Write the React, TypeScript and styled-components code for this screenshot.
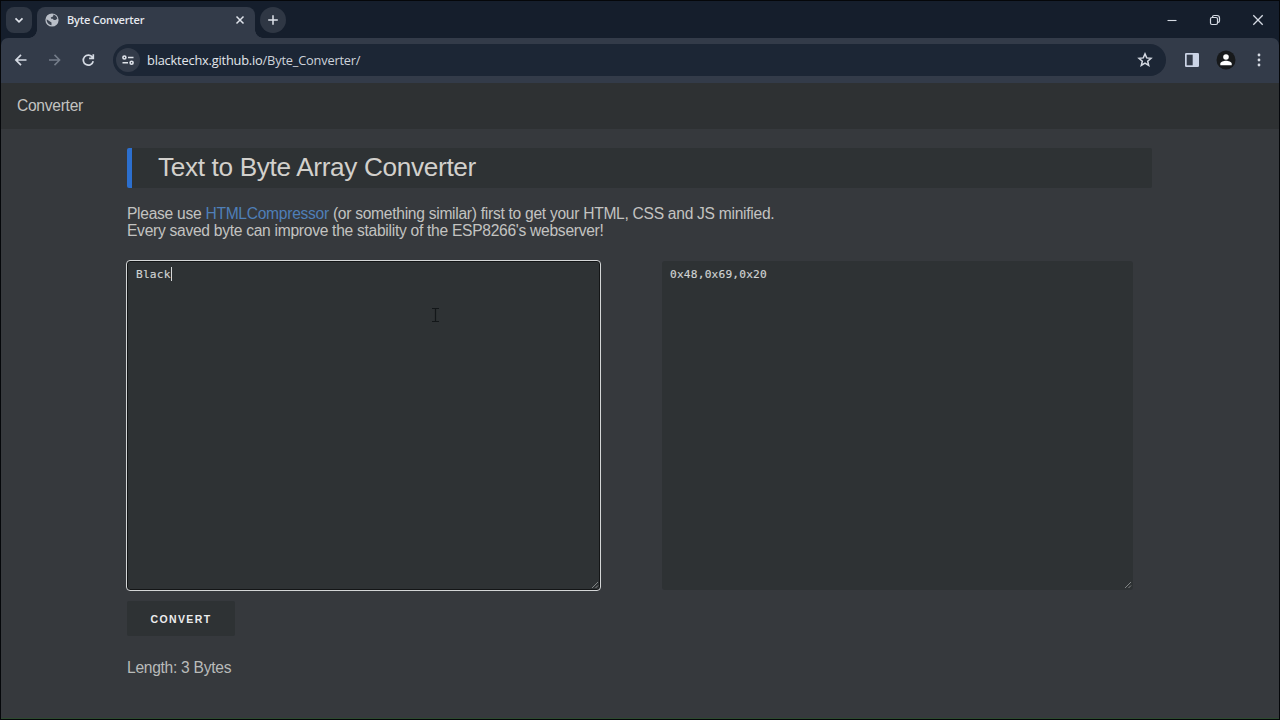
import React from "react";
import styled, { createGlobalStyle } from "styled-components";

const GlobalStyle = createGlobalStyle`
  * { box-sizing: border-box; }
  html, body { margin: 0; padding: 0; background: #000; overflow: hidden; }
`;

const ui = `"Open Sans", "Noto Sans", sans-serif`;
const sans = `"Liberation Sans", Arial, sans-serif`;
const mono = `"DejaVu Sans Mono", "Liberation Mono", monospace`;

const Window = styled.div`
  width: 1280px;
  height: 720px;
  display: flex;
  flex-direction: column;
  background: #151e2c;
  border: 1px solid #05070a;
`;

const TabStrip = styled.header`
  height: 37px;
  flex: none;
  display: flex;
  align-items: flex-start;
  padding: 6px 0 0 5px;
  background: #151e2c;
`;

const StripButton = styled.button<{ $round?: boolean }>`
  width: 26px;
  height: 26px;
  padding: 0;
  border: 0;
  flex: none;
  display: grid;
  place-items: center;
  border-radius: ${(p) => (p.$round ? "50%" : "8px")};
  background: #2f3744;
  color: #dfe3ea;
`;

const Tab = styled.div`
  position: relative;
  width: 218px;
  height: 31px;
  margin: 0 5px;
  padding: 0 8px 5px 8px;
  display: flex;
  align-items: center;
  border-radius: 8px 8px 0 0;
  background: #333b49;
  &::before,
  &::after {
    content: "";
    position: absolute;
    bottom: 0;
    width: 8px;
    height: 8px;
  }
  &::before {
    left: -8px;
    background: radial-gradient(circle at 0 0, transparent 7.5px, #333b49 8px);
  }
  &::after {
    right: -8px;
    background: radial-gradient(circle at 100% 0, transparent 7.5px, #333b49 8px);
  }
`;

const TabTitle = styled.span`
  flex: 1;
  margin-left: 8px;
  font: 600 11px/16px ${ui};
  letter-spacing: -0.18px;
  color: #e6e9ef;
  white-space: nowrap;
`;

const IconButton = styled.button<{ $w?: number; $dim?: boolean }>`
  width: ${(p) => p.$w ?? 34}px;
  height: 30px;
  flex: none;
  padding: 0;
  border: 0;
  display: grid;
  place-items: center;
  background: none;
  color: ${(p) => (p.$dim ? "#757d8a" : "#d5dae3")};
`;

const WindowControls = styled.div`
  margin: -2px 0 0 auto;
  display: flex;
`;

const Toolbar = styled.nav`
  height: 45px;
  flex: none;
  display: flex;
  align-items: center;
  padding: 0 3px 2px 3px;
  background: #333b49;
  border-radius: 7px 7px 0 0;
`;

const AddressBar = styled.div`
  width: 1055px;
  height: 32px;
  margin-left: 7px;
  padding: 0 4px 0 3px;
  display: flex;
  align-items: center;
  border-radius: 16px;
  background: #1c2635;
`;

const SiteInfo = styled.span`
  width: 24px;
  height: 24px;
  display: grid;
  place-items: center;
  border-radius: 50%;
  background: #333b49;
  color: #dfe3ea;
`;

const Url = styled.span`
  flex: 1;
  margin-left: 7px;
  font: 400 12.8px/20px ${ui};
  letter-spacing: -0.19px;
  color: #e3e6ec;
`;

const UrlPath = styled.span`
  color: #cdd2da;
`;

const ToolbarIcons = styled.div`
  display: flex;
  margin-left: 9px;
`;

const Page = styled.div`
  flex: 1;
  display: flex;
  flex-direction: column;
  background: #36393d;
  border-bottom: 1px solid #2b4a2d;
  font-family: ${sans};
  color: #c3c3c1;
`;

const SiteNav = styled.div`
  height: 46px;
  flex: none;
  padding: 0 16px;
  font-size: 15.6px;
  letter-spacing: -0.28px;
  line-height: 46px;
  background: #2e3133;
`;

const Main = styled.main`
  padding: 19px 127px 0 126px;
`;

const Heading = styled.h1`
  height: 40px;
  margin: 0;
  padding-left: 26px;
  border-left: 5px solid #2c6fce;
  border-radius: 2px;
  background: #2e3234;
  font-size: 26.2px;
  letter-spacing: -0.34px;
  line-height: 39px;
  font-weight: 400;
  color: #d2d0cc;
`;

const Intro = styled.p`
  margin: 17px 0 0;
  font-size: 15.6px;
  letter-spacing: -0.28px;
  line-height: 17px;
  white-space: nowrap;
`;

const Link = styled.a`
  color: #4f7fb8;
`;

const Editors = styled.div`
  display: flex;
  gap: 60px;
  margin: 21px 0 0 -1px;
`;

const Editor = styled.div<{ $focused?: boolean }>`
  width: ${(p) => (p.$focused ? 475 : 473)}px;
  height: 331px;
  padding: ${(p) => (p.$focused ? "6px 9px" : "6px 8px")};
  position: relative;
  display: flex;
  align-items: flex-start;
  border-radius: 4px;
  font: 11.2px/15px ${mono};
  letter-spacing: 0.19px;
  -webkit-text-stroke: 0.15px currentColor;
  color: #d0d3d3;
  background: #2e3234;
  ${(p) =>
    p.$focused
      ? "border: 1.5px solid #d4d6d7; box-shadow: inset 0 0 0 1px #131516;"
      : "border: 1px solid transparent; background-clip: padding-box;"}
`;

const Caret = styled.span`
  width: 1px;
  height: 14px;
  background: #d6d8d8;
`;

const Grip = styled.svg`
  position: absolute;
  right: 1px;
  bottom: 1px;
`;

const MousePointer = styled.svg`
  position: absolute;
  left: 304px;
  top: 46px;
`;

const ConvertButton = styled.button`
  display: block;
  width: 108px;
  height: 35px;
  margin: 10px 0 0;
  padding: 1px 0 0;
  border: 0;
  border-radius: 2px;
  background: #2e3234;
  color: #eceded;
  font: 700 10.5px/34px ${sans};
  letter-spacing: 1.4px;
  text-align: center;
`;

const Length = styled.p`
  margin: 22px 0 0;
  font-size: 15.6px;
  letter-spacing: -0.28px;
  line-height: 19px;
  color: #b9bbba;
`;

const stroke = {
  fill: "none",
  stroke: "currentColor",
  strokeWidth: 1.7,
} as const;

const ResizeGrip = () => (
  <Grip width="8" height="8" viewBox="0 0 8 8" stroke="#8b8e8f" strokeWidth="0.9">
    <path d="M1 7 7 1M4.5 7 7 4.5" />
  </Grip>
);

export default function App() {
  return (
    <>
      <GlobalStyle />
      <Window>
        <TabStrip>
          <StripButton aria-label="Search tabs">
            <svg width="10" height="10" viewBox="0 0 10 10" {...stroke}>
              <path d="m1.5 3.3 3.5 3.5 3.5-3.5" />
            </svg>
          </StripButton>
          <Tab>
            <svg width="14" height="14" viewBox="0 0 14 14">
              <circle cx="7" cy="7" r="6.6" fill="#b9bec7" />
              <path
                d="M1.6 6.3 4.6 8.3l1.9 1.2v2.7C3.6 12 1.7 9.5 1.6 6.3zM8.5 1.6c2 .6 3.4 2.2 3.8 4.2L10.5 7H8.8L7.7 5.800H6.200L5.800 4.400 8 3.500z"
                fill="#3b4350"
              />
            </svg>
            <TabTitle>Byte Converter</TabTitle>
            <svg width="14" height="14" viewBox="0 0 14 14" {...stroke} stroke="#dfe3ea" strokeWidth={1.5}>
              <path d="m3.5 3.5 7 7M10.5 3.5l-7 7" />
            </svg>
          </Tab>
          <StripButton $round aria-label="New tab">
            <svg width="12" height="12" viewBox="0 0 12 12" {...stroke} strokeWidth={1.5}>
              <path d="M6 1.2v9.6M1.2 6h9.6" />
            </svg>
          </StripButton>
          <WindowControls>
            <IconButton $w={43} aria-label="Minimize">
              <svg width="12" height="12" viewBox="0 0 12 12" {...stroke} strokeWidth={1.1}>
                <path d="M1.5 6.5h9" />
              </svg>
            </IconButton>
            <IconButton $w={43} aria-label="Restore">
              <svg width="12" height="12" viewBox="0 0 12 12" {...stroke} strokeWidth={1.2}>
                <rect x="1.5" y="3.5" width="7" height="7" rx="1.5" />
                <path d="M3.5 3.2c0-1.1.7-1.7 1.7-1.7H8c1.5 0 2.5 1 2.5 2.5v2.8c0 1-.7 1.7-1.7 1.7" />
              </svg>
            </IconButton>
            <IconButton $w={43} aria-label="Close">
              <svg width="12" height="12" viewBox="0 0 12 12" {...stroke} strokeWidth={1.3}>
                <path d="m1.3 1.3 9.4 9.4M10.7 1.3l-9.4 9.4" />
              </svg>
            </IconButton>
          </WindowControls>
        </TabStrip>

        <Toolbar>
          <IconButton aria-label="Back">
            <svg width="14" height="14" viewBox="0 0 14 14" {...stroke}>
              <path d="M12.5 7H2.2M7 1.9 1.9 7 7 12.1" />
            </svg>
          </IconButton>
          <IconButton $dim aria-label="Forward">
            <svg width="14" height="14" viewBox="0 0 14 14" {...stroke} strokeWidth={1.5}>
              <path d="M1 7h10.3M6.5 1.9 11.6 7 6.5 12.1" />
            </svg>
          </IconButton>
          <IconButton aria-label="Reload">
            <svg width="14" height="14" viewBox="0 0 14 14" {...stroke}>
              <path d="M10.5 4.4A5 5 0 1 0 11.2 8.2M11.3 1.2v4.1H7.1" />
            </svg>
          </IconButton>
          <AddressBar>
            <SiteInfo>
              <svg width="14" height="12" viewBox="0 0 14 12" {...stroke} strokeWidth={1.6}>
                <circle cx="3.4" cy="3.5" r="1.5" />
                <path d="M7 3.5h5.5M1.5 8.7H7" />
                <circle cx="10.6" cy="8.7" r="1.5" />
              </svg>
            </SiteInfo>
            <Url>
              blacktechx.github.io<UrlPath>/Byte_Converter/</UrlPath>
            </Url>
            <IconButton aria-label="Bookmark">
              <svg width="16" height="16" viewBox="0 0 16 16" {...stroke} strokeWidth={1.5}>
                <path d="m8 1.9 1.7 4 4.3.4-3.3 2.9 1 4.3L8 11.2l-3.7 2.3 1-4.3L2 6.3 6.3 5.9z" />
              </svg>
            </IconButton>
          </AddressBar>
          <ToolbarIcons>
            <IconButton aria-label="Side panel">
              <svg width="14" height="14" viewBox="0 0 14 14">
                <path d="M1.3 0h11.4Q14 0 14 1.3v11.4q0 1.3-1.3 1.3H1.3Q0 14 0 12.7V1.3Q0 0 1.3 0z" fill="#ccd4e6" />
                <path d="M1.7 1.7h6v10.6h-6z" fill="#333b49" />
              </svg>
            </IconButton>
            <IconButton $w={33} aria-label="Profile">
              <svg width="20" height="20" viewBox="0 0 20 20">
                <circle cx="10" cy="10" r="9.5" fill="#17191b" />
                <circle cx="10" cy="7" r="2.8" fill="#fff" />
                <path d="M4.3 15.3v-1.6c0-2 3.4-3 5.7-3s5.7 1 5.7 3v1.6z" fill="#fff" />
              </svg>
            </IconButton>
            <IconButton aria-label="Menu">
              <svg width="4" height="14" viewBox="0 0 4 14" fill="currentColor">
                <circle cx="2" cy="2" r="1.4" />
                <circle cx="2" cy="7" r="1.4" />
                <circle cx="2" cy="12" r="1.4" />
              </svg>
            </IconButton>
          </ToolbarIcons>
        </Toolbar>

        <Page>
          <SiteNav>Converter</SiteNav>
          <Main>
            <Heading>Text to Byte Array Converter</Heading>
            <Intro>
              Please use <Link>HTMLCompressor</Link> (or something similar) first to get your HTML, CSS and JS minified.
              <br />
              Every saved byte can improve the stability of the ESP8266's webserver!
            </Intro>
            <Editors>
              <Editor $focused>
                Black
                <Caret />
                <ResizeGrip />
                <MousePointer width="9" height="16" viewBox="0 0 9 16" fill="none" stroke="#131719" strokeWidth="1.2">
                  <path d="M1 1.5h7M1 14.5h7M4.5 1.5v13" />
                </MousePointer>
              </Editor>
              <Editor>
                0x48,0x69,0x20
                <ResizeGrip />
              </Editor>
            </Editors>
            <ConvertButton>CONVERT</ConvertButton>
            <Length>Length: 3 Bytes</Length>
          </Main>
        </Page>
      </Window>
    </>
  );
}
